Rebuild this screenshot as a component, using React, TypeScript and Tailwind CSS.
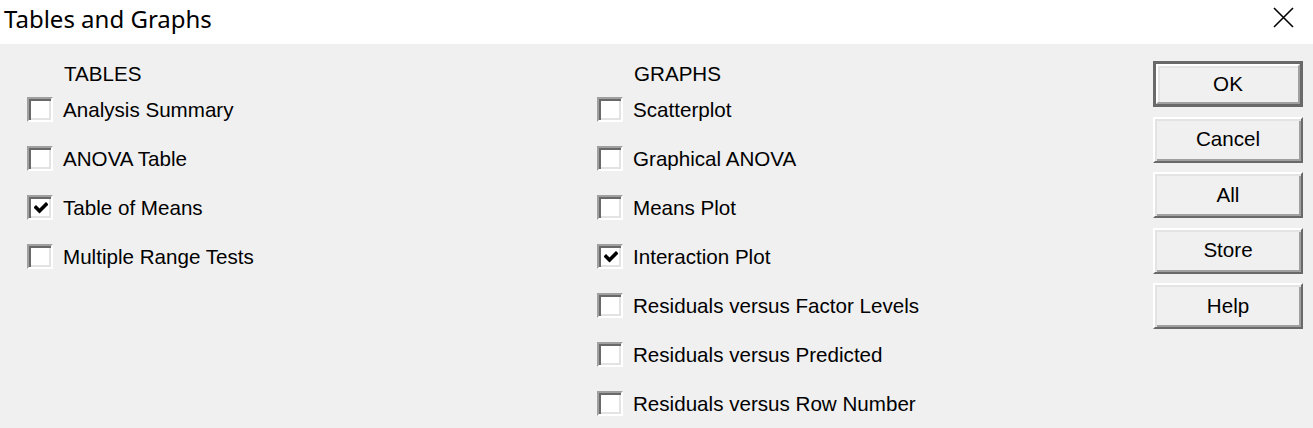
import { useState } from 'react';

const tables = ['Analysis Summary', 'ANOVA Table', 'Table of Means', 'Multiple Range Tests'];
const graphs = [
  'Scatterplot',
  'Graphical ANOVA',
  'Means Plot',
  'Interaction Plot',
  'Residuals versus Factor Levels',
  'Residuals versus Predicted',
  'Residuals versus Row Number',
];

function CheckBox({ label, checked, onToggle }: { label: string; checked: boolean; onToggle: () => void }) {
  return (
    <div className="flex h-[49px] items-center cursor-default" onClick={onToggle}>
      <div className="flex h-[25px] w-[26px] shrink-0 items-center justify-center border-2 border-t-[#a0a0a0] border-l-[#a0a0a0] border-r-white border-b-white bg-white shadow-[inset_2px_2px_0_#696969,inset_-2px_-2px_0_#e3e3e3]">
        {checked && (
          <svg width="14" height="12" viewBox="0 0 14 12" className="ml-[1px] mt-[1px]">
            <polyline points="2,5.5 5.5,9 12,2.5" fill="none" stroke="#000" strokeWidth="3.6" strokeLinecap="square" />
          </svg>
        )}
      </div>
      <span className="ml-[10px] mt-[2px] whitespace-nowrap">{label}</span>
    </div>
  );
}

function Column({ title, items, state, toggle }: { title: string; items: string[]; state: Record<string, boolean>; toggle: (k: string) => void }) {
  return (
    <div className="flex flex-col">
      <div className="h-[22px] pl-[37px] leading-[22px] mt-[1px]">{title}</div>
      {items.map((it) => (
        <CheckBox key={it} label={it} checked={!!state[it]} onToggle={() => toggle(it)} />
      ))}
    </div>
  );
}

function Button({ label, isDefault }: { label: string; isDefault?: boolean }) {
  if (isDefault) {
    return (
      <button className="h-[46px] w-[150px] border-[3px] border-[#696969] bg-[#f0f0f0] p-0">
        <div className="flex h-full w-full items-center justify-center border-2 border-t-white border-l-white border-r-[#a0a0a0] border-b-[#a0a0a0] shadow-[inset_2px_2px_0_#e3e3e3]">
          {label}
        </div>
      </button>
    );
  }
  return (
    <button className="flex h-[46px] w-[150px] items-center justify-center border-2 border-t-white border-l-white border-r-[#696969] border-b-[#696969] bg-[#f0f0f0] shadow-[inset_2px_2px_0_#e3e3e3,inset_-2px_-2px_0_#a0a0a0]">
      {label}
    </button>
  );
}

export default function App() {
  const [state, setState] = useState<Record<string, boolean>>({
    'Table of Means': true,
    'Interaction Plot': true,
  });
  const toggle = (k: string) => setState((s) => ({ ...s, [k]: !s[k] }));

  return (
    <div className="flex h-[428px] w-[1313px] flex-col overflow-hidden bg-[#f0f0f0] text-black">
      <div className="flex h-[44px] shrink-0 items-start justify-between bg-white pl-[4px] pr-[19px] pt-[4px]">
        <span className="text-[24px] font-['Noto_Sans',sans-serif] leading-[30px]">Tables and Graphs</span>
        <svg width="21" height="21" viewBox="0 0 21 21" className="mt-[3px]">
          <path d="M1 1 L20 20 M20 1 L1 20" stroke="#000" strokeWidth="1.6" />
        </svg>
      </div>
      <div className="flex flex-1 font-['Liberation_Sans',Arial,sans-serif] text-[20.6px]">
        <div className="w-[597px] pl-[27px] pt-[18px]">
          <Column title="TABLES" items={tables} state={state} toggle={toggle} />
        </div>
        <div className="flex-1 pt-[18px]">
          <Column title="GRAPHS" items={graphs} state={state} toggle={toggle} />
        </div>
        <div className="mr-[10px] flex flex-col gap-[9.5px] pt-[17px]">
          <Button label="OK" isDefault />
          <Button label="Cancel" />
          <Button label="All" />
          <Button label="Store" />
          <Button label="Help" />
        </div>
      </div>
    </div>
  );
}
